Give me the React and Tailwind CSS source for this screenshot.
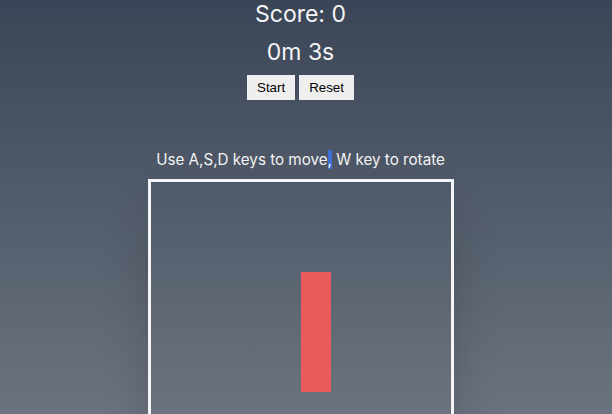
import React from "react";

export default function App() {
  return (
    <div className="h-[414px] w-full overflow-hidden bg-[linear-gradient(180deg,#3a4557_0%,#6b737e_100%)]">
      <div className="w-[601px] flex flex-col items-center text-[#f4f4f4] font-['Inter',sans-serif]">
        <div className="shrink-0 text-[23px] leading-[28px] h-[38px]">Score: 0</div>
        <div className="shrink-0 text-[23px] leading-[28px] h-[37px]">0m 3s</div>
        <div className="shrink-0 flex gap-[4px]">
          <button className="h-[25px] px-[10px] bg-[#efefef] text-black text-[13.33px] font-['Liberation_Sans',sans-serif]">Start</button>
          <button className="h-[25px] px-[10px] bg-[#efefef] text-black text-[13.33px] font-['Liberation_Sans',sans-serif]">Reset</button>
        </div>
        <div className="shrink-0 mt-[50px] text-[15.2px] leading-[20px] h-[29px]">
          Use A,S,D keys to move<span className="bg-[#3b6fd6]">,</span> W key to rotate
        </div>
        <div className="shrink-0 w-[306px] h-[306px] border-[3px] border-[#f5f5f7] shadow-2xl flex flex-col">
          <div className="h-[90px] shrink-0" />
          <div className="flex shrink-0">
            <div className="w-[150px]" />
            <div className="w-[30px] h-[120px] bg-[#e95a5c]" />
          </div>
        </div>
      </div>
    </div>
  );
}
